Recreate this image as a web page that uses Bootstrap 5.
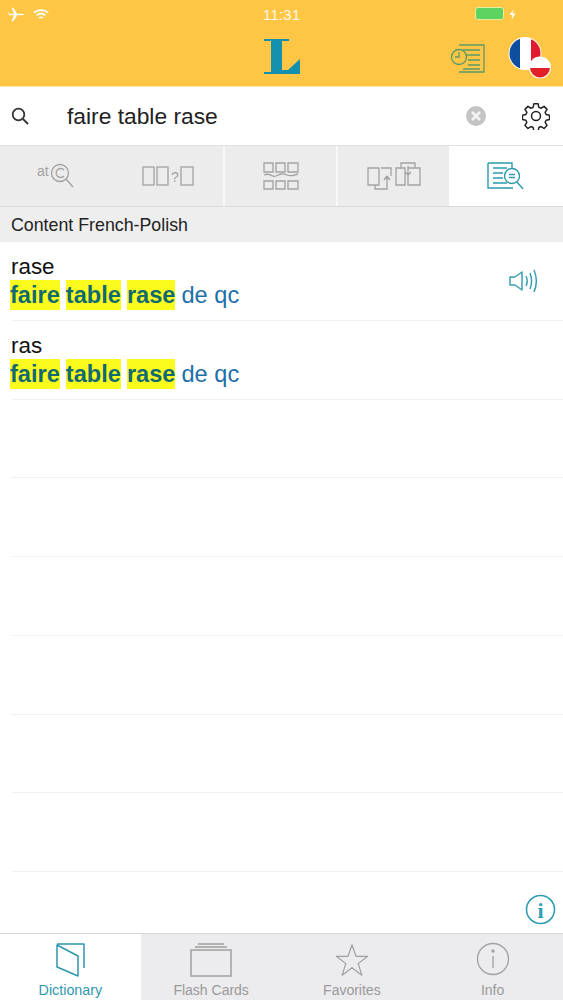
<!DOCTYPE html>
<html lang="en">
<head>
  <meta charset="UTF-8">
  <meta name="viewport" content="width=device-width, initial-scale=1">
  <link href="https://cdn.jsdelivr.net/npm/bootstrap@5.3.0/dist/css/bootstrap.min.css" rel="stylesheet">
  <title>Dictionary</title>
  <style>
    body {
      font-family: "Liberation Sans", Arial, sans-serif;
      background: #fff;
      color: #1c1c1c;
    }
    .app-screen { width: 563px; height: 1000px; overflow: hidden; position: relative; }
    .top-head { height: 87px; background: #fec644; border-bottom: 1px solid #fde7ae; position: relative; }
    .status-row { height: 29px; padding: 0 8px; color: #fff; }
    .status-time { position: absolute; left: 0; right: 0; top: 5px; text-align: center; font-size: 15.5px; line-height: 20px; color: #fff8e8; }
    .logo-l { position: absolute; left: 262px; top: 37px; }
    .head-recent { position: absolute; left: 450px; top: 43px; }
    .head-flags { position: absolute; left: 507px; top: 35px; }
    .search-row { height: 58px; padding: 0 13px 0 11px; }
    .search-text { font-size: 22.8px; margin-left: 38px; color: #222; }
    .mode-tabs { height: 62px; background: #ececec; border-top: 1px solid #e2e2e2; border-bottom: 1px solid #d9d9d9; }
    .mode-cell { height: 100%; }
    .mode-first { width: 223px; }
    .mode-mid { width: 113px; border-left: 2px solid #f8f8f8; }
    .mode-mid-b { width: 113px; border-left: 2px solid #f8f8f8; }
    .mode-active { width: 114px; background: #fff; }
    .section-head { height: 35px; background: #eeeeee; font-size: 17.8px; line-height: 36px; padding-left: 11px; color: #222; }
    .result-row { height: 78.75px; border-bottom: 1px solid #f1f1f1; margin-left: 11px; position: relative; }
    .result-word { font-size: 22.4px; line-height: 26px; padding-top: 12px; color: #111; }
    .result-trans { font-size: 23.6px; line-height: 30px; color: #1f70a8; white-space: nowrap; margin-left: -1px; }
    .hit { background: #fbfb1d; color: #116a72; font-weight: 700; margin-right: 6px; display: inline-block; }
    .row-sound { position: absolute; left: 497px; top: 26px; }
    .row-last { height: 61px; border-bottom: 0; }
    .info-float { position: absolute; left: 525px; top: 894px; }
    .bottom-tabs { height: 67px; border-top: 1px solid #d6d6d6; background: #ecebed; }
    .tab-cell { width: 141px; height: 100%; font-size: 14px; color: #9a9a9a; padding-top: 8px; }
    .tab-cell svg { height: 35px; display: block; margin: 0 auto; }
    .tab-label { line-height: 16px; margin-top: 5px; }
    .tab-on { background: #fff; color: #2e97ad; }
    .tab-on .tab-label { font-size: 14.3px; }
  </style>
</head>
<body>
<div class="app-screen">

  <!-- yellow header with status bar -->
  <div class="top-head">
    <div class="status-row d-flex align-items-center gap-2">
      <svg width="17" height="15" viewBox="0 0 20 18" fill="#fff"><path d="M1 8h6L4 1h2l5 7h5c2 0 3 .5 3 1s-1 1-3 1h-5l-5 7H4l3-7H1L0 6h1z"/></svg>
      <svg width="16" height="13" viewBox="0 0 18 14" fill="none" stroke="#fff" stroke-width="2"><path d="M1 5c4-4 12-4 16 0M4 8c3-2.500 7-2.500 10 0M7 11c1-1 3-1 4 0"/></svg>
    </div>
    <div class="status-time">11:31</div>
    <svg class="position-absolute" style="left:474px;top:6px" width="44" height="16" viewBox="0 0 44 16"><rect x="1.500" y="1.500" width="28" height="12" rx="2.500" fill="#5fd35f" stroke="#e4efa0"/><path d="M39.500 3l-4 6h3l-1 5 4-6.500h-3z" fill="#fff"/></svg>
    <svg class="logo-l" width="40" height="40" viewBox="0 0 40 40" fill="#1391ae"><path d="M2 2h25v2h-7v29h6L38 22v15H2v-2h7V4H2z"/></svg>
    <svg class="head-recent" width="36" height="32" viewBox="0 0 36 32" fill="none" stroke="#5c9a6a" stroke-width="1.300"><path d="M9 2h25v27H9"/><path d="M13 7h17M16 12h14M18 17h12M18 22h12M13 26h17"/><circle cx="9" cy="14" r="7.500" fill="#fec644"/><path d="M9 9v5H5"/></svg>
    <svg class="head-flags" width="48" height="46" viewBox="0 0 48 46">
      <defs>
        <clipPath id="clipFr"><circle cx="18" cy="18.500" r="15.500"/></clipPath>
        <clipPath id="clipPl"><circle cx="33" cy="32.500" r="10"/></clipPath>
      </defs>
      <circle cx="18" cy="18.500" r="16.500" fill="#fff"/>
      <g clip-path="url(#clipFr)">
        <rect x="2" y="2" width="11" height="34" fill="#0d4f9e"/>
        <rect x="24" y="2" width="11" height="34" fill="#e01b2f"/>
      </g>
      <circle cx="33" cy="32.500" r="11" fill="#fff"/>
      <rect x="22" y="33" width="22" height="11" fill="#e41e26" clip-path="url(#clipPl)"/>
    </svg>
  </div>

  <!-- search -->
  <div class="search-row d-flex align-items-center">
    <svg width="18" height="18" viewBox="0 0 18 18" fill="none" stroke="#333" stroke-width="1.800"><circle cx="7.500" cy="7.500" r="5.800"/><path d="M12 12l5 5"/></svg>
    <span class="search-text flex-grow-1">faire table rase</span>
    <svg width="20" height="20" viewBox="0 0 20 20" style="margin-right:36px"><circle cx="10" cy="10" r="10" fill="#c4c4c4"/><path d="M6 6l8 8M14 6l-8 8" stroke="#f4f4f4" stroke-width="2.500"/></svg>
    <svg width="28" height="28" viewBox="0 0 30 30" fill="none" stroke="#222" stroke-width="1.600" stroke-linejoin="round"><circle cx="15" cy="15" r="4.800"/><path d="M12.700 2h4.600l.8 3.700 2.300 1 3.200-2 3.200 3.200-2 3.200 1 2.300 3.700.8v4.600l-3.700.8-1 2.300 2 3.200-3.200 3.200-3.200-2-2.300 1-.8 3.700h-4.600l-.8-3.700-2.300-1-3.200 2-3.200-3.200 2-3.200-1-2.300-3.700-.8v-4.600l3.700-.8 1-2.300-2-3.200 3.200-3.200 3.200 2 2.300-1z"/></svg>
  </div>

  <!-- search modes -->
  <div class="mode-tabs d-flex">
    <div class="mode-cell mode-first d-flex align-items-center">
      <svg style="margin-left:37px" width="38" height="26" viewBox="0 0 38 26" fill="none" stroke="#a2a2a2" stroke-width="1.300"><text x="0" y="13" font-family="Liberation Sans" font-size="14" fill="#a2a2a2" stroke="none">at</text><circle cx="23" cy="10" r="8.500"/><path d="M27 7a4.500 4.500 0 1 0 0 6M29 16l7 8"/></svg>
      <svg style="margin-left:67px" width="52" height="22" viewBox="0 0 52 22" fill="none" stroke="#a2a2a2" stroke-width="1.300"><rect x="1" y="2" width="11" height="18"/><rect x="15" y="2" width="11" height="18"/><rect x="39" y="2" width="12" height="18"/><text x="29" y="17" font-family="Liberation Sans" font-size="14" fill="#a2a2a2" stroke="none">?</text></svg>
    </div>
    <div class="mode-cell mode-mid d-flex align-items-center justify-content-center">
      <svg width="36" height="28" viewBox="0 0 36 28" fill="none" stroke="#a2a2a2" stroke-width="1.300"><path d="M1 1h9v9H1zM13 1h9v9h-9zM25 1h10v9H25zM1 19h9v8H1zM13 19h9v8h-9zM25 19h10v8H25zM1 13c6-3 8 3 12 1s6-3 11-1 7 0 11-1"/></svg>
    </div>
    <div class="mode-cell mode-mid-b d-flex align-items-center justify-content-center">
      <svg width="54" height="28" viewBox="0 0 54 28" fill="none" stroke="#a2a2a2" stroke-width="1.300"><path d="M1 6h11v17H1zM14 6h10v8M8 23v4h12V14M20 14l-3 4M20 14l3 4M29 6h9v17h-9zM41 6h12v17H41zM34 6V1h14v5M41 4v9M41 13l-3-3M41 13l3-3"/></svg>
    </div>
    <div class="mode-active d-flex align-items-center justify-content-center">
      <svg width="38" height="28" viewBox="0 0 38 28" fill="none" stroke="#2a9bb0" stroke-width="1.400"><path d="M1 1h24v5M1 1v25h25M6 6h14M6 11h10M6 16h10M6 21h14"/><circle cx="25" cy="14" r="7.500" fill="#fff"/><path d="M22 12.500h6M22 15.500h6M30 20l6 7"/></svg>
    </div>
  </div>

  <div class="section-head">Content French-Polish</div>

  <!-- results -->
  <div class="result-row">
    <div class="result-word">rase</div>
    <div class="result-trans"><span class="hit">faire</span><span class="hit">table</span><span class="hit">rase</span>de qc</div>
    <svg class="row-sound" width="30" height="26" viewBox="0 0 30 26" fill="none" stroke="#3a9fb4" stroke-width="1.500"><path d="M2 9h5l7-5v18l-7-5H2z" stroke-linejoin="round"/><path d="M18 8c1.500 3 1.500 7 0 10M22 5c2 5 2 11 0 16M26 2c3 7 3 15 0 22"/></svg>
  </div>
  <div class="result-row">
    <div class="result-word">ras</div>
    <div class="result-trans"><span class="hit">faire</span><span class="hit">table</span><span class="hit">rase</span>de qc</div>
  </div>
  <div class="result-row"></div>
  <div class="result-row"></div>
  <div class="result-row"></div>
  <div class="result-row"></div>
  <div class="result-row"></div>
  <div class="result-row"></div>
  <div class="result-row row-last"></div>

  <svg class="info-float" width="31" height="31" viewBox="0 0 31 31" fill="none"><circle cx="15.500" cy="15.500" r="14" stroke="#2f9db3" stroke-width="1.600"/><text x="15.500" y="24" text-anchor="middle" font-family="Liberation Serif" font-weight="700" font-size="22" fill="#2f9db3">i</text></svg>

  <!-- bottom tabs -->
  <div class="bottom-tabs d-flex">
    <div class="tab-cell tab-on text-center">
      <svg width="30" height="35" viewBox="0 0 30 35" fill="none" stroke="#2e97ad" stroke-width="1.500" stroke-linejoin="round"><path d="M2 2h27v24M2 3v22l21 9V14z"/></svg>
      <div class="tab-label">Dictionary</div>
    </div>
    <div class="tab-cell text-center">
      <svg width="42" height="35" viewBox="0 0 42 35" fill="none" stroke="#a0a0a0" stroke-width="1.500"><path d="M8 2h26M5 5h32"/><rect x="1" y="8" width="40" height="26"/></svg>
      <div class="tab-label">Flash Cards</div>
    </div>
    <div class="tab-cell text-center">
      <svg width="34" height="35" viewBox="0 0 36 38" fill="none" stroke="#a0a0a0" stroke-width="1.300" stroke-linejoin="round"><path d="M18 3l4.300 12.500H35l-10.300 8 4 12.500L18 28l-10.700 8 4-12.500L1 15.500h12.700z"/></svg>
      <div class="tab-label">Favorites</div>
    </div>
    <div class="tab-cell text-center">
      <svg width="34" height="35" viewBox="0 0 34 35" fill="none" stroke="#a0a0a0" stroke-width="1.300"><circle cx="17" cy="17" r="15.500"/><path d="M17 14v12"/><circle cx="17" cy="9" r="1" fill="#a0a0a0"/></svg>
      <div class="tab-label">Info</div>
    </div>
  </div>
</div>
<script src="https://cdn.jsdelivr.net/npm/bootstrap@5.3.0/dist/js/bootstrap.bundle.min.js"></script>
</body>
</html>
